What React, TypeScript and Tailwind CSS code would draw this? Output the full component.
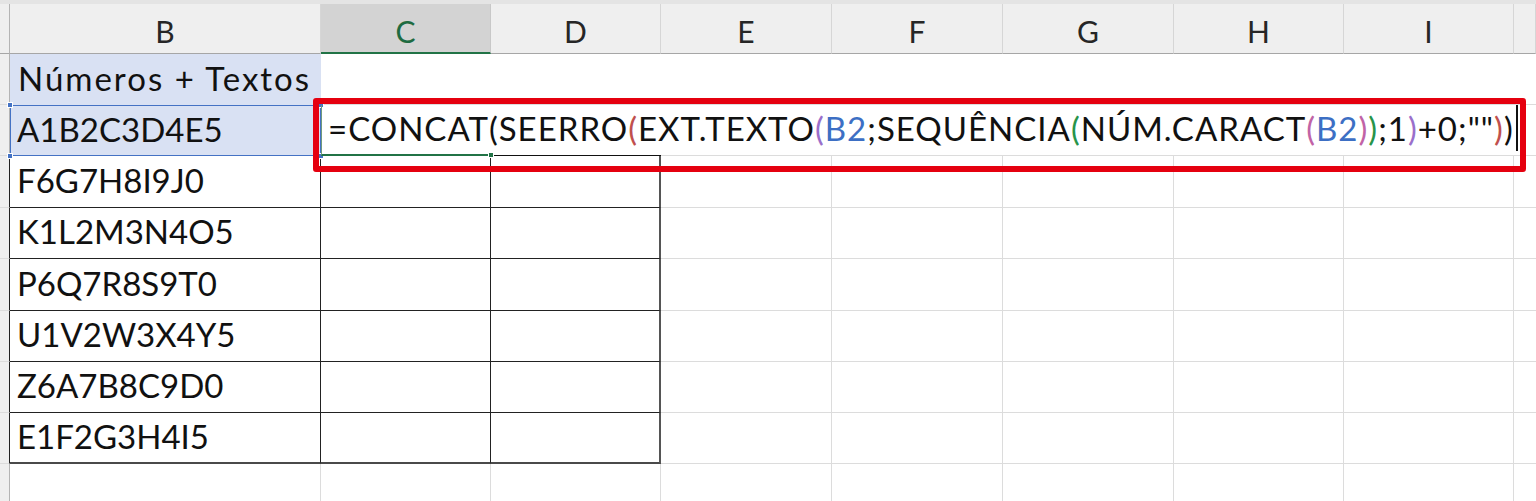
import React from "react";

const font = "font-['Lato','Liberation_Sans',sans-serif]";

const cols = [
  { key: "B", w: 311 },
  { key: "C", w: 170 },
  { key: "D", w: 170 },
  { key: "E", w: 171 },
  { key: "F", w: 171 },
  { key: "G", w: 171 },
  { key: "H", w: 170 },
  { key: "I", w: 170 },
  { key: "", w: 22 },
];

const rowGrid = "grid grid-cols-[10px_311px_170px_170px_171px_171px_171px_170px_170px_22px]";

const values = ["F6G7H8I9J0", "K1L2M3N4O5", "P6Q7R8S9T0", "U1V2W3X4Y5", "Z6A7B8C9D0", "E1F2G3H4I5"];
const tableHeights = ["h-[52px]", "h-[51px]", "h-[52px]", "h-[51px]", "h-[51px]", "h-[51px]"];

function Formula() {
  return (
    <span className="whitespace-nowrap tracking-[1px] text-[#111]">
      =CONCAT(SEERRO
      <span className="text-[#c0504d]">(</span>
      EXT.TEXTO
      <span className="text-[#9a6fcb]">(</span>
      <span className="text-[#3d6fc4]">B2</span>
      ;SEQUÊNCIA
      <span className="text-[#27944a]">(</span>
      NÚM.CARACT
      <span className="text-[#c163a6]">(</span>
      <span className="text-[#3d6fc4]">B2</span>
      <span className="text-[#c163a6]">)</span>
      <span className="text-[#27944a]">)</span>
      ;1
      <span className="text-[#9a6fcb]">)</span>
      +0;""
      <span className="text-[#c0504d]">)</span>)
    </span>
  );
}

function Handle({ className }: { className: string }) {
  return <span className={`absolute w-[6px] h-[6px] bg-[#4472c4] border border-white ${className}`} />;
}

export default function App() {
  return (
    <div className={`relative w-[1536px] h-[501px] overflow-hidden bg-white ${font} text-[33px] leading-none text-[#111]`}>
      <div className="h-[4px] bg-[#e4e4e4]" />

      {/* column headers */}
      <div className={`${rowGrid} h-[50px] bg-[#efefef] text-[30px] text-[#262626]`}>
        <div className="border-r border-b border-r-[#b4b4b4] border-b-[#a6a6a6]" />
        {cols.map((c) =>
          c.key === "C" ? (
            <div key={c.key} className="flex items-center justify-center pt-[5px] bg-[#d3d3d3] border-r border-r-[#c8c8c8] border-b-2 border-b-[#217346] text-[#1e6b41]">
              C
            </div>
          ) : (
            <div key={c.key || "j"} className="flex items-center justify-center pt-[5px] border-r border-b border-r-[#d6d6d6] border-b-[#a6a6a6]">
              {c.key}
            </div>
          )
        )}
      </div>

      {/* row 1 */}
      <div className={`${rowGrid} h-[51px]`}>
        <div className="bg-[#efefef] border-r border-b border-r-[#b4b4b4] border-b-[#dcdcdc]" />
        <div className="flex items-center pl-[8px] pb-[2px] tracking-[2px] bg-[#d9e1f3]">Números + Textos</div>
        {cols.slice(1).map((c, i) => (
          <div key={i} className="border-b border-b-[#dcdcdc]" />
        ))}
      </div>

      {/* row 2 */}
      <div className={`${rowGrid} h-[51px]`}>
        <div className="bg-[#efefef] border-r border-b border-r-[#b4b4b4] border-b-[#dcdcdc]" />
        <div className="relative flex items-center pl-[7px] pb-[3px] bg-[#d9e1f3]">
          A1B2C3D4E5
          <span className="absolute inset-0 border border-[#4472c4]" />
          <Handle className="-left-[3px] -top-[3px]" />
          <Handle className="-left-[3px] -bottom-[3px]" />
          <Handle className="-right-[3px] -top-[3px]" />
          <Handle className="-right-[3px] -bottom-[3px]" />
        </div>
        <div className="relative z-10 flex items-center pl-[6px] pb-[3px] border-l border-l-[#6f9a7d] border-b-2 border-b-[#217346]">
          <Formula />
          <span className="shrink-0 ml-[2px] w-[2px] h-[46px] bg-[#111]" />
          <span className="absolute -right-[3px] -bottom-[4px] w-[6px] h-[6px] bg-[#217346] border border-white" />
        </div>
        <div className="border-b border-b-[#111]" />
        {cols.slice(3).map((c, i) => (
          <div key={i} className="border-b border-b-[#dcdcdc]" />
        ))}
      </div>

      {/* table rows 3-8 */}
      {values.map((v, r) => (
        <div key={v} className={`${rowGrid} ${tableHeights[r]}`}>
          <div className="bg-[#efefef] border-r border-b border-r-[#222] border-b-[#dcdcdc]" />
          <div className={`flex items-center pl-[7px] pb-[3px] border-r border-r-[#222] ${r === values.length - 1 ? "border-b-2 border-b-[#4a4a4a]" : "border-b border-b-[#222]"}`}>
            {v}
          </div>
          <div className={`border-r border-r-[#222] ${r === values.length - 1 ? "border-b-2 border-b-[#4a4a4a]" : "border-b border-b-[#222]"}`} />
          <div className={`border-r-2 border-r-[#555] ${r === values.length - 1 ? "border-b-2 border-b-[#4a4a4a]" : "border-b border-b-[#222]"}`} />
          {cols.slice(3).map((c, i) => (
            <div key={i} className={`border-b border-b-[#dcdcdc] ${c.key ? "border-r border-r-[#dcdcdc]" : ""}`} />
          ))}
        </div>
      ))}

      {/* row 9 */}
      <div className={`${rowGrid} h-[40px]`}>
        <div className="bg-[#efefef] border-r border-r-[#b4b4b4]" />
        {cols.map((c, i) => (
          <div key={i} className={c.key ? "border-r border-r-[#dcdcdc]" : ""} />
        ))}
      </div>

      {/* annotation box */}
      <div className="absolute left-[313px] top-[98px] w-[1213px] h-[74px] border-[6px] border-[#e5000f] rounded-[3px] pointer-events-none z-20" />
    </div>
  );
}
